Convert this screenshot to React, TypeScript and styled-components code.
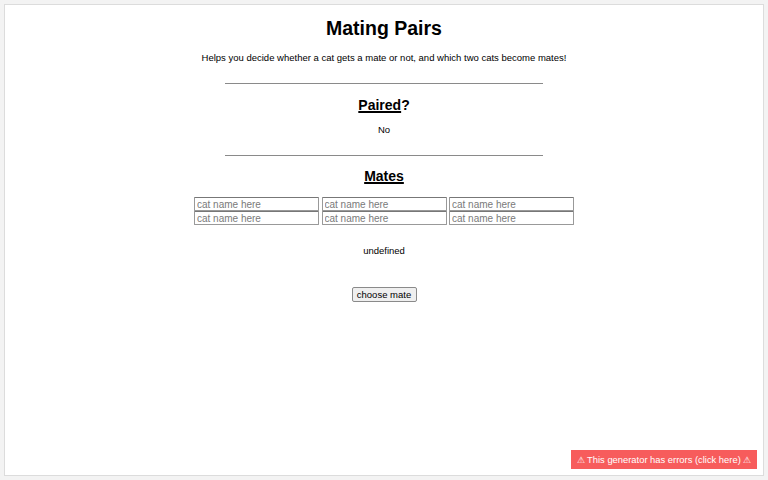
import React from 'react';
import styled, { createGlobalStyle } from 'styled-components';

const GlobalStyle = createGlobalStyle`
  html, body {
    margin: 0;
    padding: 0;
    background: #f3f3f3;
    font-family: "Liberation Sans", Arial, sans-serif;
  }
`;

const Page = styled.div`
  box-sizing: border-box;
  height: 480px;
  padding: 4px;
`;

const Card = styled.main`
  box-sizing: border-box;
  height: 472px;
  background: #fff;
  border: 1px solid #dcdcdc;
  display: flex;
  flex-direction: column;
  align-items: center;
  padding-top: 11px;
  color: #000;
`;

const Title = styled.h1`
  margin: 0;
  font-size: 19.5px;
  line-height: 24px;
  font-weight: bold;
`;

const Subtitle = styled.p`
  margin: 11px 0 0;
  font-size: 9.5px;
  line-height: 13px;
`;

const Divider = styled.hr<{ $top: number }>`
  width: 318px;
  margin: ${(p) => p.$top}px 0 0;
  border: 0;
  border-top: 1px solid #8a8a8a;
  height: 0;
`;

const SectionTitle = styled.h2<{ $top: number }>`
  margin: ${(p) => p.$top}px 0 0;
  font-size: 14px;
  line-height: 17px;
  font-weight: bold;

  u {
    text-decoration-thickness: 1.5px;
  }
`;

const Value = styled.div<{ $top: number }>`
  margin-top: ${(p) => p.$top}px;
  font-size: 9.5px;
  line-height: 12px;
`;

const InputGrid = styled.div`
  margin-top: 12px;
  display: grid;
  grid-template-columns: repeat(3, 125px);
  column-gap: 2.5px;
  row-gap: 0;
`;

const NameInput = styled.input`
  box-sizing: border-box;
  width: 125px;
  height: 14px;
  margin: 0;
  padding: 0 2px;
  border: 1px solid #999;
  border-top-color: #777;
  border-radius: 1px;
  font-family: "Liberation Sans", Arial, sans-serif;
  font-size: 10px;
  color: #000;
  &::placeholder {
    color: #7a7a7a;
  }
`;

const ChooseButton = styled.button`
  margin-top: 30px;
  box-sizing: border-box;
  width: 65px;
  height: 15px;
  padding: 0;
  background: #efefef;
  border: 1px solid #8a8a8a;
  border-radius: 2px;
  font-family: "Liberation Sans", Arial, sans-serif;
  font-size: 9.5px;
  color: #000;
`;

const ErrorBadge = styled.div`
  position: fixed;
  left: 571px;
  top: 450px;
  width: 186px;
  height: 19px;
  background: #f75c5c;
  color: #fff;
  font-size: 9.4px;
  line-height: 19px;
  text-align: center;
  white-space: nowrap;
`;

export default function App() {
  const names = Array.from({ length: 6 });
  return (
    <>
      <GlobalStyle />
      <Page>
        <Card>
          <Title>Mating Pairs</Title>
          <Subtitle>
            Helps you decide whether a cat gets a mate or not, and which two cats become mates!
          </Subtitle>
          <Divider $top={19} />
          <SectionTitle $top={13}>
            <u>Paired</u>?
          </SectionTitle>
          <Value $top={10}>No</Value>
          <Divider $top={19} />
          <SectionTitle $top={12}>
            <u>Mates</u>
          </SectionTitle>
          <InputGrid>
            {names.map((_, i) => (
              <NameInput key={i} placeholder="cat name here" />
            ))}
          </InputGrid>
          <Value $top={20}>undefined</Value>
          <ChooseButton>choose mate</ChooseButton>
        </Card>
      </Page>
      <ErrorBadge>⚠ This generator has errors (click here) ⚠</ErrorBadge>
    </>
  );
}
